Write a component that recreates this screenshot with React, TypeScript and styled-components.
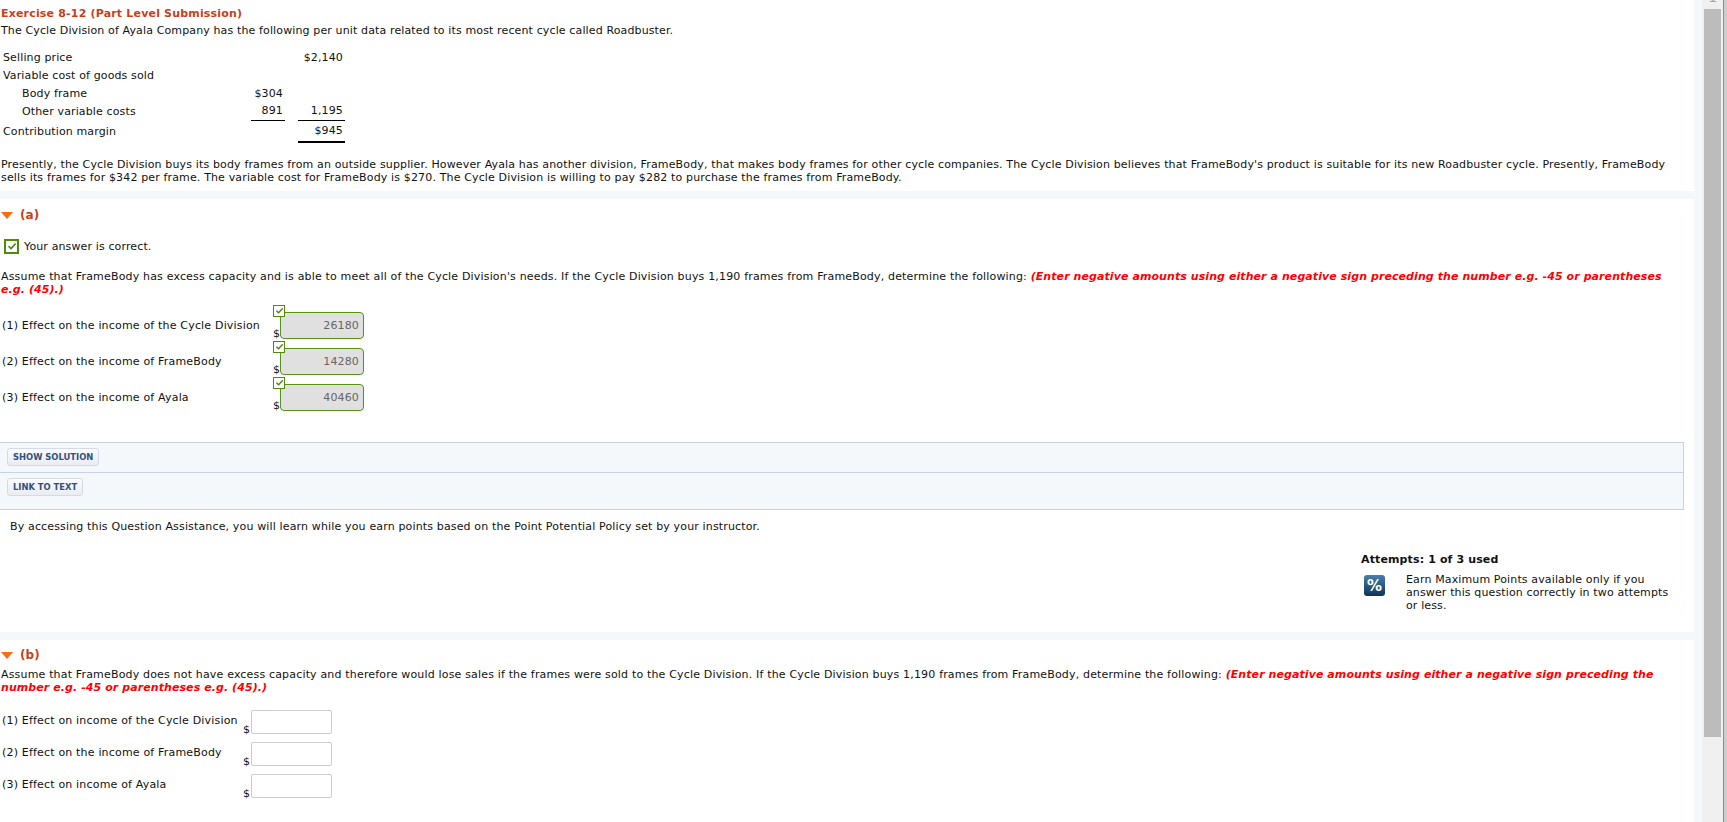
import React from "react";
import styled, { createGlobalStyle } from "styled-components";

const GlobalStyle = createGlobalStyle`
  html, body {
    margin: 0;
    padding: 0;
    height: 100%;
    overflow: hidden;
    background: #fff;
  }
  body {
    font-family: "DejaVu Sans", Verdana, sans-serif;
    font-size: 11px;
    letter-spacing: 0.13px;
    color: #111;
  }
`;

const Page = styled.div`
  display: flex;
  width: 1727px;
  height: 822px;
  overflow: hidden;
`;

const Main = styled.main`
  width: 1694px;
  flex: none;
`;

const Gutter = styled.div`
  width: 8px;
  flex: none;
  background: #f5f8fb;
`;

const ScrollTrack = styled.div`
  width: 21px;
  flex: none;
  background: #f0f0f0;
  display: flex;
  flex-direction: column;
  align-items: center;
`;

const ScrollArrow = styled.div`
  width: 0;
  height: 0;
  border-left: 4px solid transparent;
  border-right: 4px solid transparent;
  border-bottom: 2px solid #a3a3a3;
`;

const ScrollThumb = styled.div`
  width: 17px;
  height: 728px;
  margin-top: 7px;
  background: #bcbcbc;
`;

const ScrollEdge = styled.div`
  flex: 1;
  background: #cdcdcd;
  border-left: 1px solid #8e8e8e;
`;

const Intro = styled.section`
  height: 191px;
  padding: 7px 0 0 1px;
  box-sizing: border-box;
`;

const Title = styled.h1`
  margin: 0;
  font-size: 11px;
  line-height: 14px;
  font-weight: 700;
  letter-spacing: 0.18px;
  color: #c8401c;
`;

const Para = styled.p<{ $top?: number; $spacing?: number }>`
  max-width: 1685px;
  margin: ${(p) => p.$top ?? 0}px 0 0;
  line-height: 13px;
  letter-spacing: ${(p) => p.$spacing ?? 0.17}px;
`;

const DataTable = styled.table`
  border-collapse: collapse;
  margin-top: 11px;
  margin-left: 1px;
`;

const LabelCell = styled.td<{ $indent?: boolean; $tall?: boolean }>`
  width: 249px;
  height: ${(p) => (p.$tall ? 22 : 18)}px;
  padding: 0 0 0 ${(p) => (p.$indent ? 20 : 1)}px;
  box-sizing: border-box;
`;

const AmountCell = styled.td<{ $line?: "single" | "double"; $wide?: boolean }>`
  width: ${(p) => (p.$wide ? 47 : 34)}px;
  height: 18px;
  padding: 0 2px 0 0;
  box-sizing: border-box;
  text-align: right;
  border-bottom: ${(p) =>
    p.$line === "double" ? "2px solid #000" : p.$line === "single" ? "1px solid #000" : "none"};
`;

const Gap = styled.td`
  width: 13px;
  padding: 0;
`;

const Band = styled.div`
  height: 8px;
  background: #f5f8fb;
`;

const PartHead = styled.div<{ $height: number; $top?: number }>`
  display: flex;
  align-items: center;
  gap: 7px;
  height: ${(p) => p.$height}px;
  margin-top: ${(p) => p.$top ?? 0}px;
  padding-left: 1px;
  font-weight: 700;
  font-size: 12px;
  color: #c8401c;
`;

const Triangle = styled.span`
  width: 0;
  height: 0;
  border-left: 6.5px solid transparent;
  border-right: 6.5px solid transparent;
  border-top: 7px solid #ff6a13;
`;

const CorrectRow = styled.div`
  display: flex;
  align-items: center;
  gap: 5px;
  height: 16px;
  margin: 7px 0 0 4px;
`;

const CheckBox = styled.span<{ $size: number; $border: number }>`
  display: inline-flex;
  align-items: center;
  justify-content: center;
  width: ${(p) => p.$size}px;
  height: ${(p) => p.$size}px;
  box-sizing: border-box;
  border: ${(p) => p.$border}px solid #528a0e;
  background: #fff;
  color: #528a0e;
`;

const SectionBody = styled.div`
  padding-left: 1px;
`;

const Emphasis = styled.em`
  color: #f00;
  font-weight: 700;
  letter-spacing: 0.08px;
`;

const AnswerGrid = styled.div<{ $label: number; $row: number; $top: number }>`
  display: grid;
  grid-template-columns: ${(p) => p.$label}px auto;
  grid-auto-rows: ${(p) => p.$row}px;
  justify-content: start;
  align-items: center;
  margin-top: ${(p) => p.$top}px;
`;

const AnswerLabel = styled.div<{ $lift?: number }>`
  padding: 0 0 ${(p) => p.$lift ?? 0}px 2px;
  letter-spacing: 0.18px;
`;

const AnswerCell = styled.div`
  position: relative;
  display: flex;
  align-items: flex-end;
`;

const Dollar = styled.span`
  width: 7px;
  line-height: 11px;
`;

const FilledInput = styled.div`
  width: 84px;
  height: 27px;
  box-sizing: border-box;
  border: 1px solid #5a9216;
  border-radius: 4px;
  background: #e0e0e0;
  color: #666;
  text-align: right;
  line-height: 25px;
  padding-right: 4px;
`;

const BlankInput = styled.div`
  width: 81px;
  height: 24px;
  margin: 0 0 1px 1px;
  box-sizing: border-box;
  border: 1px solid #ccc;
  border-radius: 2px;
  background: #fff;
`;

const CheckOverlay = styled.span`
  position: absolute;
  left: 0;
  top: -7px;
`;

const HelpPanel = styled.div`
  margin-top: 27px;
  width: 1684px;
  height: 68px;
  box-sizing: border-box;
  background: #f5f8fb;
  border: 1px solid #c8d2e4;
  border-left-width: 0;
`;

const HelpRow = styled.div<{ $divided?: boolean }>`
  height: 30px;
  padding: 5px 0 0 7px;
  box-sizing: border-box;
  border-bottom: ${(p) => (p.$divided ? "1px solid #c8d2e4" : "none")};
`;

const HelpButton = styled.button`
  display: block;
  height: 18px;
  padding: 0 5px;
  border: 1px solid #d5dbe6;
  border-radius: 3px;
  background: linear-gradient(#fafbfc, #e9edf2);
  color: #32507f;
  font-family: "DejaVu Sans", Verdana, sans-serif;
  font-size: 8.4px;
  font-weight: 700;
  letter-spacing: 0;
`;

const AssistNote = styled.p`
  margin: 10px 0 0 10px;
  line-height: 13px;
  letter-spacing: 0.15px;
`;

const AttemptsBox = styled.div`
  width: 330px;
  margin: 20px 0 0 1361px;
`;

const AttemptsTitle = styled.div`
  font-weight: 700;
  line-height: 14px;
`;

const AttemptsRow = styled.div`
  display: flex;
  margin-top: 6px;
`;

const PercentIcon = styled.span`
  flex: none;
  display: flex;
  align-items: center;
  justify-content: center;
  width: 21px;
  height: 21px;
  margin: 2px 21px 0 3px;
  border-radius: 3px;
  background: linear-gradient(#4a7fae, #0e3354);
  color: #fff;
  font-size: 15px;
  font-weight: 700;
  letter-spacing: 0;
`;

const AttemptsText = styled.div`
  width: 276px;
  line-height: 13px;
`;

const PartA = styled.section`
  height: 433px;
`;

function Tick({ size }: { size: number }) {
  return (
    <svg width={size} height={size} viewBox="0 0 10 10" fill="none">
      <path d="M1.5 5.2 L4 7.6 L8.6 2.6" stroke="currentColor" strokeWidth="1.6" />
    </svg>
  );
}

const partA = [
  { label: "(1) Effect on the income of the Cycle Division", value: "26180" },
  { label: "(2) Effect on the income of FrameBody", value: "14280" },
  { label: "(3) Effect on the income of Ayala", value: "40460" },
];

const partB = [
  "(1) Effect on income of the Cycle Division",
  "(2) Effect on the income of FrameBody",
  "(3) Effect on income of Ayala",
];

export default function App() {
  return (
    <>
      <GlobalStyle />
      <Page>
        <Main>
          <Intro>
            <Title>Exercise 8-12 (Part Level Submission)</Title>
            <Para $top={3} $spacing={0.13}>
              The Cycle Division of Ayala Company has the following per unit data related to its most recent cycle called Roadbuster.
            </Para>
            <DataTable>
              <tbody>
                <tr>
                  <LabelCell>Selling price</LabelCell>
                  <AmountCell />
                  <Gap />
                  <AmountCell $wide>$2,140</AmountCell>
                </tr>
                <tr>
                  <LabelCell>Variable cost of goods sold</LabelCell>
                  <AmountCell />
                  <Gap />
                  <AmountCell $wide />
                </tr>
                <tr>
                  <LabelCell $indent>Body frame</LabelCell>
                  <AmountCell>$304</AmountCell>
                  <Gap />
                  <AmountCell $wide />
                </tr>
                <tr>
                  <LabelCell $indent>Other variable costs</LabelCell>
                  <AmountCell $line="single">891</AmountCell>
                  <Gap />
                  <AmountCell $wide $line="single">1,195</AmountCell>
                </tr>
                <tr>
                  <LabelCell $tall>Contribution margin</LabelCell>
                  <AmountCell />
                  <Gap />
                  <AmountCell $wide $line="double">$945</AmountCell>
                </tr>
              </tbody>
            </DataTable>
            <Para $top={15} $spacing={0.145}>
              Presently, the Cycle Division buys its body frames from an outside supplier. However Ayala has another division, FrameBody, that makes body frames for other cycle companies. The Cycle Division believes that FrameBody's product is suitable for its new Roadbuster cycle. Presently, FrameBody sells its frames for $342 per frame. The variable cost for FrameBody is $270. The Cycle Division is willing to pay $282 to purchase the frames from FrameBody.
            </Para>
          </Intro>
          <Band />
          <PartA>
            <PartHead $height={32}>
              <Triangle />
              (a)
            </PartHead>
            <CorrectRow>
              <CheckBox $size={15} $border={2}>
                <Tick size={10} />
              </CheckBox>
              Your answer is correct.
            </CorrectRow>
            <SectionBody>
              <Para $top={16}>
                Assume that FrameBody has excess capacity and is able to meet all of the Cycle Division's needs. If the Cycle Division buys 1,190 frames from FrameBody, determine the following:{" "}
                <Emphasis>(Enter negative amounts using either a negative sign preceding the number e.g. -45 or parentheses e.g. (45).)</Emphasis>
              </Para>
            </SectionBody>
            <AnswerGrid $label={273} $row={36} $top={11}>
              {partA.map((row) => (
                <React.Fragment key={row.label}>
                  <AnswerLabel>{row.label}</AnswerLabel>
                  <AnswerCell>
                    <Dollar>$</Dollar>
                    <FilledInput>{row.value}</FilledInput>
                    <CheckOverlay>
                      <CheckBox $size={12} $border={1}>
                        <Tick size={9} />
                      </CheckBox>
                    </CheckOverlay>
                  </AnswerCell>
                </React.Fragment>
              ))}
            </AnswerGrid>
            <HelpPanel>
              <HelpRow $divided>
                <HelpButton>SHOW SOLUTION</HelpButton>
              </HelpRow>
              <HelpRow>
                <HelpButton>LINK TO TEXT</HelpButton>
              </HelpRow>
            </HelpPanel>
            <AssistNote>
              By accessing this Question Assistance, you will learn while you earn points based on the Point Potential Policy set by your instructor.
            </AssistNote>
            <AttemptsBox>
              <AttemptsTitle>Attempts: 1 of 3 used</AttemptsTitle>
              <AttemptsRow>
                <PercentIcon>%</PercentIcon>
                <AttemptsText>
                  Earn Maximum Points available only if you answer this question correctly in two attempts or less.
                </AttemptsText>
              </AttemptsRow>
            </AttemptsBox>
          </PartA>
          <Band />
          <PartHead $height={24} $top={3}>
            <Triangle />
            (b)
          </PartHead>
          <SectionBody>
            <Para $top={1}>
              Assume that FrameBody does not have excess capacity and therefore would lose sales if the frames were sold to the Cycle Division. If the Cycle Division buys 1,190 frames from FrameBody, determine the following:{" "}
              <Emphasis>(Enter negative amounts using either a negative sign preceding the number e.g. -45 or parentheses e.g. (45).)</Emphasis>
            </Para>
          </SectionBody>
          <AnswerGrid $label={243} $row={32} $top={12}>
            {partB.map((label) => (
              <React.Fragment key={label}>
                <AnswerLabel $lift={3}>{label}</AnswerLabel>
                <AnswerCell>
                  <Dollar>$</Dollar>
                  <BlankInput />
                </AnswerCell>
              </React.Fragment>
            ))}
          </AnswerGrid>
        </Main>
        <Gutter />
        <ScrollTrack>
          <ScrollArrow />
          <ScrollThumb />
        </ScrollTrack>
        <ScrollEdge />
      </Page>
    </>
  );
}
